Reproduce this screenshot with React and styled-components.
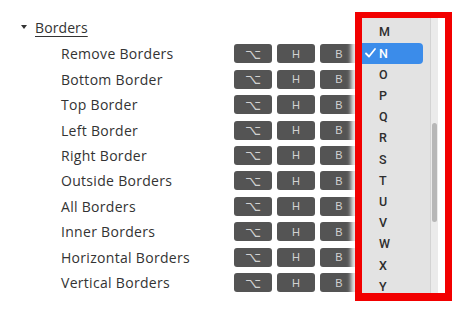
import styled, { createGlobalStyle } from "styled-components";

const GlobalStyle = createGlobalStyle`
  html, body {
    margin: 0;
    background: #ffffff;
  }
  body {
    font-family: "Open Sans", "Liberation Sans", sans-serif;
    color: #333333;
  }
`;

const Page = styled.div`
  position: relative;
  width: 474px;
  height: 310px;
  overflow: hidden;
  padding-top: 17px;
  box-sizing: border-box;
`;

const Header = styled.div`
  display: flex;
  align-items: center;
  height: 20px;
  padding-left: 21px;
  gap: 8px;
`;

const Caret = styled.span`
  width: 0;
  height: 0;
  border-left: 3px solid transparent;
  border-right: 3px solid transparent;
  border-top: 4px solid #333;
`;

const HeaderLink = styled.span`
  font-size: 14px;
  letter-spacing: 0.1px;
  text-decoration: underline;
  text-underline-offset: 3px;
  text-decoration-thickness: 1px;
`;

const List = styled.div`
  display: flex;
  flex-direction: column;
  margin-top: 4px;
`;

const Row = styled.div`
  display: grid;
  grid-template-columns: 168px repeat(3, 38px);
  column-gap: 5px;
  align-items: center;
  height: 25.45px;
  padding-left: 61px;
`;

const Label = styled.span`
  font-size: 14px;
  letter-spacing: 0.3px;
  white-space: nowrap;
`;

const Key = styled.span`
  display: flex;
  align-items: center;
  justify-content: center;
  height: 19px;
  border-radius: 3px;
  background: #545454;
  color: #d2d2d2;
  font-family: ${(p) => (p.$symbol ? '"DejaVu Sans", sans-serif' : '"Liberation Sans", sans-serif')};
  font-size: ${(p) => (p.$symbol ? "14px" : "11px")};
`;

const Frame = styled.div`
  position: absolute;
  left: 355px;
  top: 12px;
  width: 83px;
  height: 275px;
  border: 7px solid #f20000;
  border-top-width: 6px;
  border-bottom-width: 8px;
  background: #ffffff;
  box-shadow: -3px 0 4px 1px rgba(255, 255, 255, 0.85);
  display: flex;
`;

const Menu = styled.div`
  position: relative;
  width: 76px;
  height: 100%;
  background: #e3e3e3;
  overflow: hidden;
  display: flex;
`;

const Items = styled.div`
  flex: 1;
  padding-top: 3.4px;
  display: flex;
  flex-direction: column;
`;

const Item = styled.div`
  position: relative;
  flex-shrink: 0;
  height: 21.2px;
  display: flex;
  align-items: center;
  padding-left: 17px;
  margin-right: 7px;
  border-radius: 0 4px 4px 0;
  font-family: Roboto, "Liberation Sans", sans-serif;
  font-weight: 500;
  font-size: 12.5px;
  color: ${(p) => (p.$selected ? "#ffffff" : "#2e2e2e")};
  background: ${(p) => (p.$selected ? "#3b8cea" : "transparent")};
`;

const Check = styled.svg`
  position: absolute;
  left: 3px;
  top: 5px;
`;

const Track = styled.div`
  width: 8px;
  flex-shrink: 0;
  background: #ebebeb;
  border-left: 1px solid #d3d3d3;
  display: flex;
  flex-direction: column;
  padding-top: 105px;
  box-sizing: border-box;
`;

const Thumb = styled.div`
  width: 5px;
  margin-left: 1px;
  height: 99px;
  border-radius: 3px;
  background: #b7b7b7;
`;

const rows = [
  "Remove Borders",
  "Bottom Border",
  "Top Border",
  "Left Border",
  "Right Border",
  "Outside Borders",
  "All Borders",
  "Inner Borders",
  "Horizontal Borders",
  "Vertical Borders",
];

const letters = ["M", "N", "O", "P", "Q", "R", "S", "T", "U", "V", "W", "X", "Y"];

export default function App() {
  return (
    <>
      <GlobalStyle />
      <Page>
        <Header>
          <Caret />
          <HeaderLink>Borders</HeaderLink>
        </Header>
        <List>
          {rows.map((r) => (
            <Row key={r}>
              <Label>{r}</Label>
              <Key $symbol>⌥</Key>
              <Key>H</Key>
              <Key>B</Key>
            </Row>
          ))}
        </List>
        <Frame>
          <Menu>
            <Items>
              {letters.map((l) => (
                <Item key={l} $selected={l === "N"}>
                  {l === "N" && (
                    <Check width="11" height="10" viewBox="0 0 11 10">
                      <path d="M1 5.5 L4 8.5 L10 1" fill="none" stroke="#fff" strokeWidth="1.8" strokeLinecap="round" strokeLinejoin="round" />
                    </Check>
                  )}
                  {l}
                </Item>
              ))}
            </Items>
            <Track>
              <Thumb />
            </Track>
          </Menu>
        </Frame>
      </Page>
    </>
  );
}
